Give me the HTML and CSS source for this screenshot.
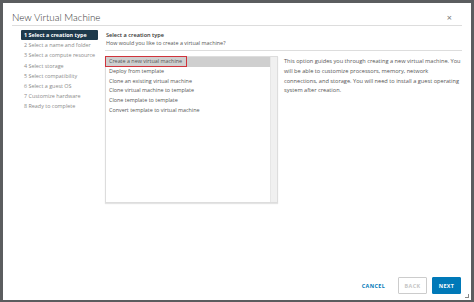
FILE: index.html
```html
<!DOCTYPE html>
<html lang="en">
<head>
    <meta charset="UTF-8">
    <title>New Virtual Machine</title>
    <link rel="stylesheet" href="styles.css">
</head>
<body>

    <div class="dialog">
        <div class="dialog-header">
            <h1>New Virtual Machine</h1>
            <span class="close">&times;</span>
        </div>

        <div class="dialog-body">
            <!-- Wizard steps -->
            <ul class="steps">
                <li class="active">1 Select a creation type</li>
                <li>2 Select a name and folder</li>
                <li>3 Select a compute resource</li>
                <li>4 Select storage</li>
                <li>5 Select compatibility</li>
                <li>6 Select a guest OS</li>
                <li>7 Customize hardware</li>
                <li>8 Ready to complete</li>
            </ul>

            <div class="step-content">
                <div class="step-title">Select a creation type</div>
                <div class="step-sub">How would you like to create a virtual machine?</div>

                <div class="type-row">
                    <div class="type-list">
                        <ul>
                            <li class="selected"><span class="marked">Create a new virtual machine</span></li>
                            <li>Deploy from template</li>
                            <li>Clone an existing virtual machine</li>
                            <li>Clone virtual machine to template</li>
                            <li>Clone template to template</li>
                            <li>Convert template to virtual machine</li>
                        </ul>
                        <div class="scrollbar"></div>
                    </div>
                    <p class="type-desc">This option guides you through creating a new virtual machine. You will be able to customize processors, memory, network connections, and storage. You will need to install a guest operating system after creation.</p>
                </div>
            </div>
        </div>

        <div class="dialog-footer">
            <button class="btn-link">CANCEL</button>
            <button class="btn-outline" disabled>BACK</button>
            <button class="btn-primary">NEXT</button>
        </div>
        <span class="resize"></span>
    </div>

</body>
</html>
```

FILE: styles.css
```css
/* Page behind the modal */
body {
    margin: 0;
    width: 474px;
    height: 302px;
    background-color: #5b5d5f;
    font-family: "Open Sans", Arial, sans-serif;
    overflow: hidden;
}

ul {
    list-style: none;
    margin: 0;
    padding: 0;
}

/* Modal */
.dialog {
    position: relative;
    margin: 3px 0 0 3px;
    width: 468px;
    height: 297px;
    background-color: #fff;
    display: flex;
    flex-direction: column;
    box-sizing: border-box;
}

.dialog-header {
    margin: 0 9px;
    padding: 7px 0 1px;
    border-bottom: 1px solid #ddd;
    display: flex;
    justify-content: space-between;
    align-items: center;
}

.dialog-header h1 {
    margin: 0;
    font-family: Lato, "Open Sans", sans-serif;
    font-weight: 300;
    font-size: 9.8px;
    line-height: 14px;
    color: #333;
}

.close {
    font-size: 9px;
    color: #777;
    margin-right: 10px;
}

.dialog-body {
    flex: 1;
    display: flex;
    padding: 4px 9px 0 18px;
}

/* Wizard nav */
.steps {
    width: 77px;
    margin-right: 7px;
}

.steps li {
    font-size: 5.4px;
    line-height: 10.2px;
    color: #8a8a8a;
    padding-left: 3px;
    white-space: nowrap;
}

.steps li.active {
    background-color: #1e3a4c;
    color: #fff;
    font-weight: bold;
    border-radius: 1px;
}

/* Content */
.step-content {
    flex: 1;
    display: flex;
    flex-direction: column;
}

.step-title {
    font-size: 5.6px;
    font-weight: 600;
    color: #333;
    line-height: 8px;
    margin-top: 1px;
    padding-left: 1px;
}

.step-sub {
    font-size: 5.4px;
    color: #555;
    line-height: 9px;
    padding-left: 1px;
    padding-bottom: 2px;
    border-bottom: 1px solid #ddd;
}

.type-row {
    display: flex;
    margin-top: 5px;
}

.type-list {
    position: relative;
    width: 173px;
    height: 147px;
    border: 1px solid #ddd;
    box-sizing: border-box;
    box-shadow: 0 1px 1px #e4e4e4;
}

.type-list li {
    font-size: 5.4px;
    line-height: 9.8px;
    color: #565656;
    padding-left: 3px;
    margin-right: 7px;
}

.type-list li.selected {
    background-color: #cfcfcf;
}

.marked {
    display: inline-block;
    box-shadow: 0 0 0 1px #d0343c;
    padding: 0 4px 0 3px;
    margin-left: -3px;
    line-height: 9px;
}

.scrollbar {
    position: absolute;
    top: 0;
    right: 0;
    width: 6px;
    height: 100%;
    background-color: #f0f0f0;
    border-left: 1px solid #e6e6e6;
}

.type-desc {
    flex: 1;
    margin: 1px 0 0 6px;
    font-size: 5.65px;
    line-height: 9.8px;
    color: #565656;
}

/* Footer buttons */
.dialog-footer {
    display: flex;
    justify-content: flex-end;
    align-items: center;
    gap: 5px;
    padding: 0 10px 6px;
}

.dialog-footer button {
    font-family: "Open Sans", Arial, sans-serif;
    font-size: 5.4px;
    font-weight: bold;
    letter-spacing: 0.4px;
    height: 17px;
    width: 29px;
    padding: 0;
    border-radius: 1px;
    box-sizing: border-box;
}

.btn-link {
    background: none;
    border: none;
    color: #0079b8;
    margin-right: 5px;
}

.btn-outline {
    background-color: #fff;
    border: 1px solid #ccc;
    color: #c6c6c6;
}

.btn-primary {
    background-color: #0079b8;
    border: 1px solid #0079b8;
    color: #fff;
    height: 16px;
}

.resize {
    position: absolute;
    right: 2px;
    bottom: 2px;
    width: 3px;
    height: 3px;
    border-right: 1px solid #888;
    border-bottom: 1px solid #888;
}
```
